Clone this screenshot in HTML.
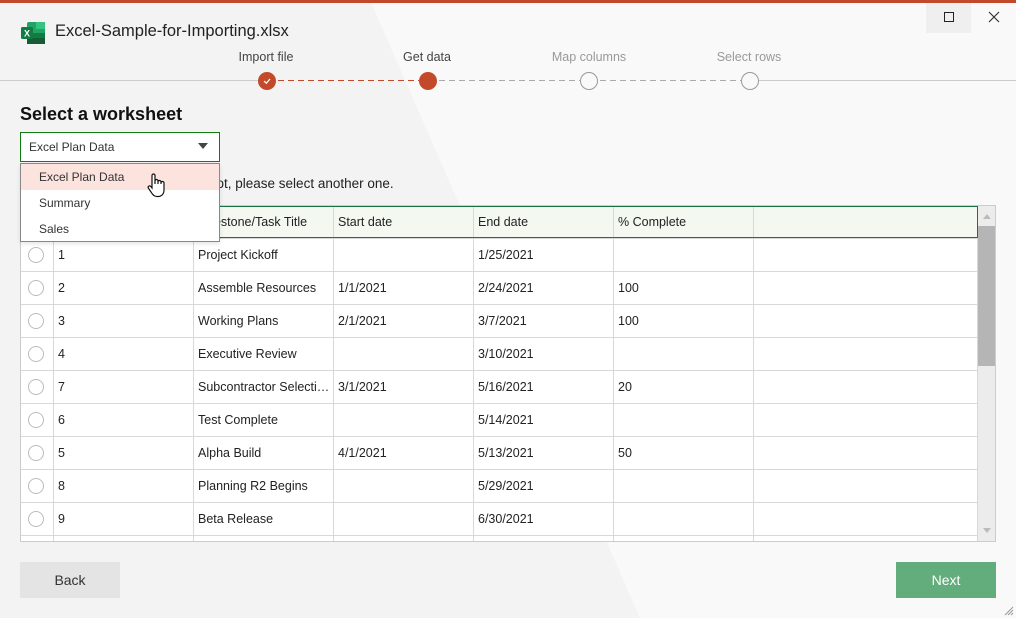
<!DOCTYPE html>
<html><head><meta charset="utf-8"><style>
*{box-sizing:border-box;margin:0;padding:0}
body{width:1016px;height:618px;overflow:hidden;position:relative;font-family:"Liberation Sans",sans-serif;color:#222;background:#f3f3f3}
.a{position:absolute}
.bgr{position:absolute;left:0;top:0;width:1016px;height:618px;background:#f9f9f9;clip-path:polygon(370px 0,1016px 0,1016px 618px,640px 618px)}
.topbar{left:0;top:0;width:1016px;height:3px;background:#c24a2a}
.step{font-size:12.5px;color:#444;top:50px;width:120px;text-align:center}
.step.g{color:#999}
.circ{width:18px;height:18px;border-radius:50%;top:72px}
table{border-collapse:collapse;font-size:12.5px;table-layout:fixed}
td{border:1px solid #d8d8d8;height:33px;padding:0 4px;white-space:nowrap;overflow:hidden;background:#fff}
th{height:32px;font-weight:normal;text-align:left;padding:0 4px;background:#f3f8f1;border:1px solid #d8d8d8;border-top:none;border-bottom:none}
.rad{display:inline-block;width:16px;height:16px;border:1px solid #bbb;border-radius:50%;vertical-align:middle;margin-left:3px;background:#fff}
.btn{height:36px;font-size:14px;text-align:center;line-height:36px}
</style></head><body>
<div class="bgr"></div>
<div class="a topbar"></div>
<svg class="a" style="left:20px;top:21px" width="26" height="24" viewBox="0 0 26 24">
<rect x="7" y="1" width="18" height="22" rx="2" fill="#21a366"/>
<rect x="16" y="1" width="9" height="7" fill="#33c481"/>
<rect x="7" y="12" width="18" height="5" fill="#107c41"/>
<rect x="7" y="17" width="18" height="6" fill="#185c37"/>
<rect x="1" y="6" width="12" height="12" rx="1.5" fill="#107c41"/>
<text x="7" y="15.5" font-size="9" font-weight="bold" fill="#fff" text-anchor="middle" font-family="Liberation Sans">X</text>
</svg>
<div class="a" style="left:55px;top:22px;font-size:16.5px;color:#222">Excel-Sample-for-Importing.xlsx</div>
<div class="a" style="left:926px;top:3px;width:45px;height:30px;background:#efefef"></div>
<div class="a" style="left:944px;top:12px;width:10px;height:10px;border:1.3px solid #222"></div>
<svg class="a" style="left:988px;top:11px" width="12" height="12"><path d="M1 1L11 11M11 1L1 11" stroke="#333" stroke-width="1.2"/></svg>
<div class="a" style="left:0;top:80px;width:258px;height:1px;background:#ccc"></div>
<div class="a" style="left:758px;top:80px;width:258px;height:1px;background:#ccc"></div>
<svg class="a" style="left:276px;top:79px" width="466" height="3">
<line x1="2" y1="1.5" x2="143" y2="1.5" stroke="#c24a2a" stroke-width="1" stroke-dasharray="6 4"/>
<line x1="163" y1="1.5" x2="304" y2="1.5" stroke="#aaa" stroke-width="1" stroke-dasharray="6 4"/>
<line x1="324" y1="1.5" x2="465" y2="1.5" stroke="#aaa" stroke-width="1" stroke-dasharray="6 4"/>
</svg>
<div class="a step" style="left:206px">Import file</div>
<div class="a step" style="left:367px">Get data</div>
<div class="a step g" style="left:529px">Map columns</div>
<div class="a step g" style="left:689px">Select rows</div>
<div class="a circ" style="left:258px;background:#c24a2a"></div>
<svg class="a" style="left:262px;top:76px" width="10" height="10"><path d="M2 5L4.3 7.2L8 3" stroke="#fff" stroke-width="1.2" fill="none"/></svg>
<div class="a circ" style="left:419px;background:#c24a2a"></div>
<div class="a circ" style="left:580px;border:1px solid #999;background:#f9f9f9"></div>
<div class="a circ" style="left:741px;border:1px solid #999;background:#f9f9f9"></div>
<div class="a" style="left:20px;top:104px;font-size:18px;font-weight:bold;color:#111">Select a worksheet</div>
<div class="a" style="left:20px;top:132px;width:200px;height:30px;border:1px solid #107c10;background:#fff;font-size:12px;line-height:28px;padding-left:8px;color:#333">Excel Plan Data</div>
<svg class="a" style="left:198px;top:143px" width="10" height="6"><path d="M0 0H10L5 6Z" fill="#444"/></svg>
<div class="a" style="left:209px;top:176px;font-size:13.5px;color:#222">not, please select another one.</div>

<div class="a" style="left:20px;top:205px;width:976px;height:337px;border:1px solid #ccc;background:#fff;overflow:hidden">
<table style="width:958px;margin-left:-1px">
<colgroup><col style="width:33px"><col style="width:140px"><col style="width:140px"><col style="width:140px"><col style="width:140px"><col style="width:140px"><col></colgroup>
<tr style="outline:1.5px solid #1e7145;outline-offset:-1px"><th></th><th></th><th>Milestone/Task Title</th><th>Start date</th><th>End date</th><th>% Complete</th><th></th></tr>
<tr><td><span class="rad"></span></td><td>1</td><td>Project Kickoff</td><td></td><td>1/25/2021</td><td></td><td></td></tr>
<tr><td><span class="rad"></span></td><td>2</td><td>Assemble Resources</td><td>1/1/2021</td><td>2/24/2021</td><td>100</td><td></td></tr>
<tr><td><span class="rad"></span></td><td>3</td><td>Working Plans</td><td>2/1/2021</td><td>3/7/2021</td><td>100</td><td></td></tr>
<tr><td><span class="rad"></span></td><td>4</td><td>Executive Review</td><td></td><td>3/10/2021</td><td></td><td></td></tr>
<tr><td><span class="rad"></span></td><td>7</td><td>Subcontractor Selecti…</td><td>3/1/2021</td><td>5/16/2021</td><td>20</td><td></td></tr>
<tr><td><span class="rad"></span></td><td>6</td><td>Test Complete</td><td></td><td>5/14/2021</td><td></td><td></td></tr>
<tr><td><span class="rad"></span></td><td>5</td><td>Alpha Build</td><td>4/1/2021</td><td>5/13/2021</td><td>50</td><td></td></tr>
<tr><td><span class="rad"></span></td><td>8</td><td>Planning R2 Begins</td><td></td><td>5/29/2021</td><td></td><td></td></tr>
<tr><td><span class="rad"></span></td><td>9</td><td>Beta Release</td><td></td><td>6/30/2021</td><td></td><td></td></tr>
<tr><td></td><td></td><td></td><td></td><td></td><td></td><td></td></tr>
</table>
<div class="a" style="left:957px;top:0;width:18px;height:335px;background:#ececec"></div>
<div class="a" style="left:957px;top:20px;width:18px;height:140px;background:#b5b5b5"></div>
<svg class="a" style="left:962px;top:8px" width="8" height="5"><path d="M0 5H8L4 0Z" fill="#bbb"/></svg>
<svg class="a" style="left:962px;top:322px" width="8" height="5"><path d="M0 0H8L4 5Z" fill="#bbb"/></svg>
</div>

<div class="a" style="left:20px;top:163px;width:200px;height:79px;border:1px solid #888;background:#fff;font-size:12px;color:#333;box-shadow:0 2px 4px rgba(0,0,0,.1)">
<div style="height:26px;line-height:26px;padding-left:18px;background:#fce3dd">Excel Plan Data</div>
<div style="height:26px;line-height:26px;padding-left:18px">Summary</div>
<div style="height:26px;line-height:26px;padding-left:18px">Sales</div>
</div>
<svg class="a" style="left:146px;top:173px" width="20" height="26" viewBox="0 0 20 26"><path d="M6 2.5a1.5 1.5 0 0 1 3 0V11v-3a1.5 1.5 0 0 1 3 0v3-2a1.5 1.5 0 0 1 3 0v2-1a1.5 1.5 0 0 1 3 0v7c0 4-2.5 6.5-6 6.5h-1c-3 0-4.5-2-6-4.5L2.3 15a1.5 1.5 0 0 1 2.5-1.6L6 15Z" fill="#fff" stroke="#111" stroke-width="1.2"/></svg>

<div class="a btn" style="left:20px;top:562px;width:100px;background:#e4e4e4;color:#333">Back</div>
<div class="a btn" style="left:896px;top:562px;width:100px;background:#62ad7b;color:#fff">Next</div>
<svg class="a" style="left:1004px;top:606px" width="10" height="10"><path d="M9 1L1 9M9 4L4 9M9 7L7 9" stroke="#999" stroke-width="1"/></svg>
</body></html>
